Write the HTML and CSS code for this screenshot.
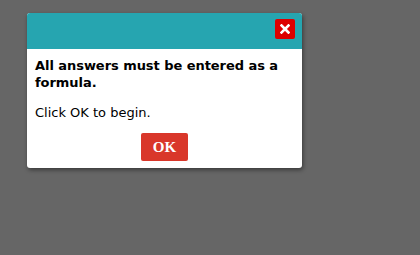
FILE: index.html
```html
<!DOCTYPE html>
<html>
<head>
<meta charset="utf-8">
<link rel="stylesheet" href="styles.css">
</head>
<body>
<div class="dialog">
  <div class="header">
    <button class="close" aria-label="Close">
      <svg width="10" height="10" viewBox="0 0 10 10"><path d="M1.5 1.5 L8.5 8.5 M8.5 1.5 L1.5 8.5" stroke="#fff" stroke-width="2.6" stroke-linecap="square"/></svg>
    </button>
  </div>
  <div class="body">
    <p class="title">All answers must be entered as a formula.</p>
    <p class="msg">Click OK to begin.</p>
    <div class="actions"><button class="ok">OK</button></div>
  </div>
</div>
</body>
</html>
```
FILE: styles.css
```css
html, body { margin: 0; padding: 0; }
body {
  background: #666666;
  width: 420px;
  height: 255px;
  overflow: hidden;
  font-family: "DejaVu Sans", Verdana, sans-serif;
}
.dialog {
  margin: 13px 0 0 27px;
  width: 275px;
  background: #fff;
  border-radius: 3px;
  box-shadow: 1px 2px 4px rgba(0,0,0,0.45);
  overflow: hidden;
}
.header {
  height: 36px;
  background: #26a5b0;
  display: flex;
  justify-content: flex-end;
  align-items: flex-start;
  padding: 6px 7px 0 0;
  box-sizing: border-box;
}
.close {
  width: 20px;
  height: 20px;
  background: #dd0000;
  border: none;
  border-radius: 2px;
  padding: 0;
  display: flex;
  align-items: center;
  justify-content: center;
}
.body {
  padding: 8px 8px 7px 8px;
}
.title {
  margin: 0;
  font-weight: bold;
  font-size: 13px;
  line-height: 17px;
  letter-spacing: -0.05px;
  color: #000;
}
.msg {
  margin: 14px 0 0 0;
  font-size: 13px;
  line-height: 16px;
  color: #000;
}
.actions {
  display: flex;
  justify-content: center;
  margin-top: 12px;
}
.ok {
  width: 47px;
  height: 28px;
  background: #d9372a;
  color: #fff;
  border: none;
  border-radius: 2px;
  font-family: "Liberation Serif", "Times New Roman", serif;
  font-weight: bold;
  font-size: 15px;
  padding: 0;
}
```
